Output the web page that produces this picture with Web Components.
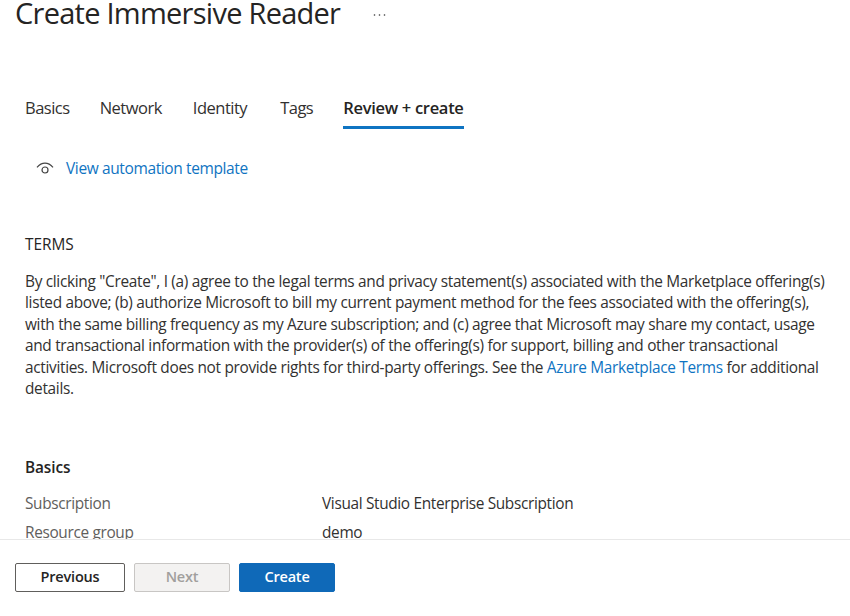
<!doctype html>
<html><head><meta charset="utf-8"><title>Create Immersive Reader</title>
<style>html,body{margin:0;height:100%;background:#fff;overflow:hidden}body{font-family:"Open Sans","Noto Sans",sans-serif;color:#252423}</style>
</head><body>
<ir-page>
  <ir-header slot="head"></ir-header>
  <ir-tabs slot="head"></ir-tabs>
  <ir-automation slot="head"></ir-automation>
  <ir-terms></ir-terms>
  <ir-summary></ir-summary>
  <ir-footer slot="foot"></ir-footer>
</ir-page>
<script>
function def(name, html){
  customElements.define(name, class extends HTMLElement{
    constructor(){super();this.attachShadow({mode:'open'}).innerHTML=html;}
  });
}
def('ir-page',`<style>
:host{display:flex;flex-direction:column;width:850px;height:616px;overflow:hidden}
.main{height:539px;overflow:hidden;flex:none}
.foot{flex:1;border-top:1px solid #e8e8e8}
</style><div class="main"><slot name="head"></slot><slot></slot></div><div class="foot"><slot name="foot"></slot></div>`);
def('ir-header',`<style>
:host{display:flex;align-items:center;height:26px;padding-left:15px;gap:33px}
h1{margin:0;font:500 29px/26px "Open Sans",sans-serif;letter-spacing:-.74px;color:#252423;white-space:nowrap}
svg{display:block;margin-top:3px}
</style><h1>Create Immersive Reader</h1><svg width="14" height="4" viewBox="0 0 14 4" fill="#333"><circle cx="1.500" cy="2" r=".8"/><circle cx="6.500" cy="2" r=".8"/><circle cx="11.500" cy="2" r=".8"/></svg>`);
def('ir-tabs',`<style>
:host{display:flex;padding:69px 0 0 25px;height:34px;font:400 16.500px/26px "Open Sans",sans-serif;letter-spacing:-.5px;color:#323130}
span{display:block;white-space:nowrap}
.b{margin-right:30px}.n{margin-right:31px}.i{margin-right:33px}.t{margin-right:30px}
.a{font-weight:600;color:#252423;letter-spacing:-.3px;border-bottom:3px solid #0f74c2;height:31px}
</style><span class="b">Basics</span><span class="n">Network</span><span class="i">Identity</span><span class="t">Tags</span><span class="a">Review + create</span>`);
def('ir-automation',`<style>
:host{display:flex;align-items:center;gap:12px;padding:25px 0 0 36px;height:28px;font:400 15.500px/28px "Open Sans",sans-serif;letter-spacing:-.38px}
a{color:#0f74c2;text-decoration:none;white-space:nowrap}
svg{display:block}
</style><svg width="18" height="12" viewBox="0 0 18 12" fill="none" stroke="#444" stroke-width="1.2"><path d="M1 5.400C3.600 2.400 6 1.200 9 1.200s5.400 1.200 8 4.200"/><circle cx="9" cy="8" r="3"/></svg><a href="#">View automation template</a>`);
def('ir-terms',`<style>
:host{display:block;padding:51px 18px 0 25px;font:400 15.400px/21.400px "Open Sans",sans-serif;letter-spacing:-.31px;color:#323130}
.h{margin:0 0 14px;line-height:24px;color:#252423;letter-spacing:0}
p{margin:0}
a{color:#0f74c2;text-decoration:none}
</style><div class="h">TERMS</div><p>By clicking "Create", I (a) agree to the legal terms and privacy statement(s) associated with the Marketplace offering(s) listed above; (b) authorize Microsoft to bill my current payment method for the fees associated with the offering(s), with the same billing frequency as my Azure subscription; and (c) agree that Microsoft may share my contact, usage and transactional information with the provider(s) of the offering(s) for support, billing and other transactional activities. Microsoft does not provide rights for third-party offerings. See the <a href="#">Azure Marketplace Terms</a> for additional details.</p>`);
def('ir-summary',`<style>
:host{display:block;padding:57px 0 0 25px;font:400 15.400px/24px "Open Sans",sans-serif;letter-spacing:-.34px}
.h{font-weight:600;color:#252423;margin-bottom:12px;line-height:24px;letter-spacing:-.1px}
.r{display:grid;grid-template-columns:297px 1fr;height:29px;align-items:start}
.k{color:#605e5c}.v{color:#323130}
</style><div class="h">Basics</div><div class="r"><span class="k">Subscription</span><span class="v">Visual Studio Enterprise Subscription</span></div><div class="r"><span class="k">Resource group</span><span class="v">demo</span></div>`);
def('ir-footer',`<style>
:host{display:flex;gap:9px;padding:23px 0 0 15px}
button{box-sizing:border-box;height:29px;border-radius:2px;font:600 14.500px/1 "Open Sans",sans-serif;letter-spacing:-.2px;padding:0;cursor:pointer}
.p{width:110px;background:#fff;border:1px solid #605e5c;color:#252423}
.n{width:96px;background:#f3f2f1;border:1px solid #c8c6c4;color:#a19f9d}
.c{width:96px;background:#0f69b8;border:1px solid #0f69b8;color:#fff}
</style><button class="p">Previous</button><button class="n" disabled>Next</button><button class="c">Create</button>`);
</script>
</body></html>
